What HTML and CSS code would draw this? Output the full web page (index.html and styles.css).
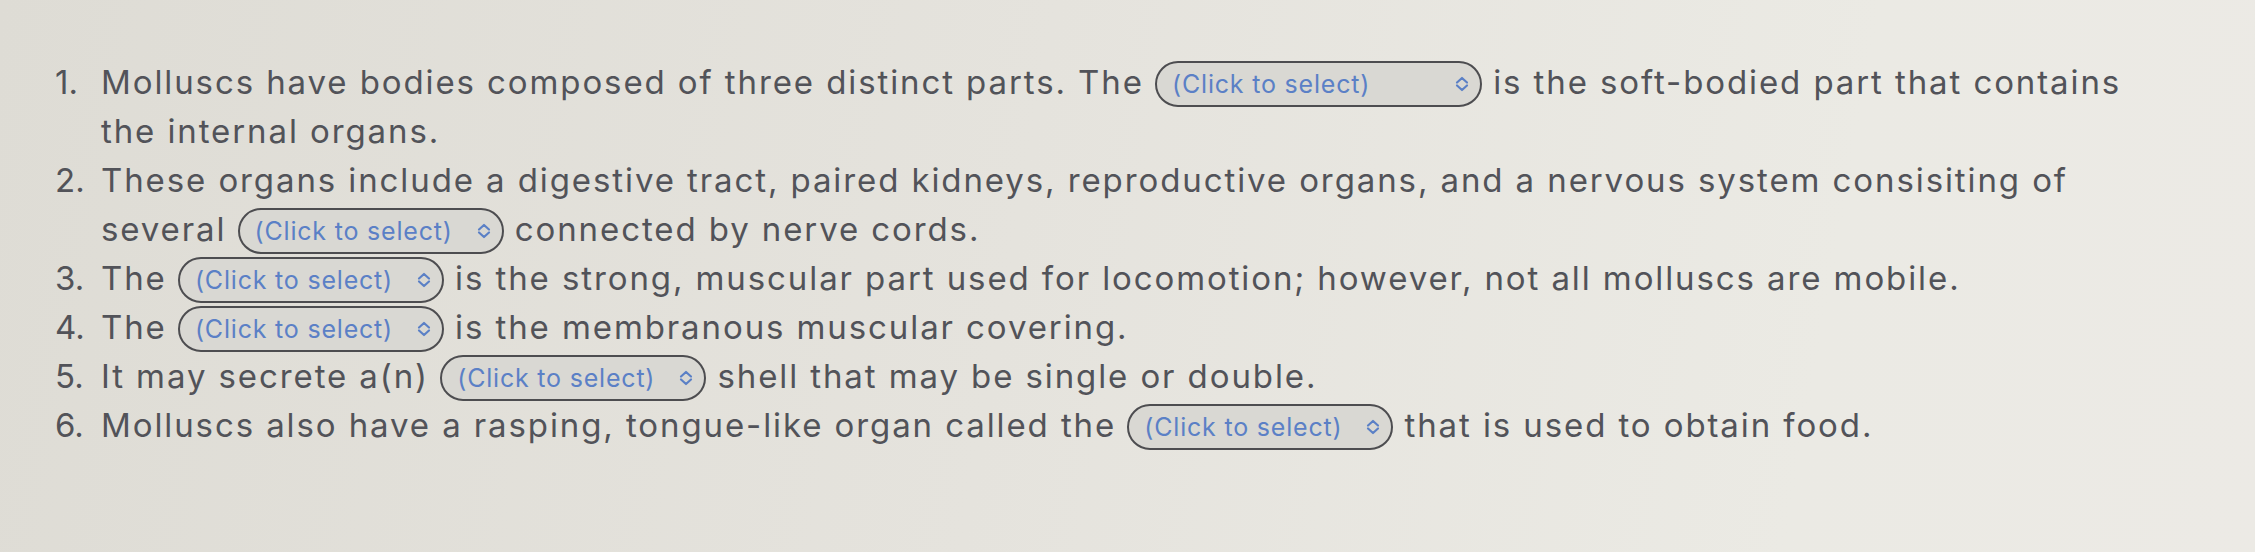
FILE: index.html
```html
<!DOCTYPE html>
<html lang="en">
<head>
<meta charset="utf-8">
<title>Molluscs</title>
<link rel="stylesheet" href="styles.css">
</head>
<body>
<main class="page">
  <ol class="items">
    <li class="item"><span class="num">1.</span><span class="text">Molluscs have bodies composed of three distinct parts. The <span class="pick wide"><span class="pick-label">(Click to select)</span><svg class="chev" viewBox="0 0 16 18" width="16" height="18"><path d="M3 7.5 L8 3 L13 7.5 M3 10.5 L8 15 L13 10.5"/></svg></span> is the soft-bodied part that contains the internal organs.</span></li>
    <li class="item"><span class="num">2.</span><span class="text">These organs include a digestive tract, paired kidneys, reproductive organs, and a nervous system consisiting of several <span class="pick"><span class="pick-label">(Click to select)</span><svg class="chev" viewBox="0 0 16 18" width="16" height="18"><path d="M3 7.5 L8 3 L13 7.5 M3 10.5 L8 15 L13 10.5"/></svg></span> connected by nerve cords.</span></li>
    <li class="item"><span class="num">3.</span><span class="text">The <span class="pick"><span class="pick-label">(Click to select)</span><svg class="chev" viewBox="0 0 16 18" width="16" height="18"><path d="M3 7.5 L8 3 L13 7.5 M3 10.5 L8 15 L13 10.5"/></svg></span> is the strong, muscular part used for locomotion; however, not all molluscs are mobile.</span></li>
    <li class="item"><span class="num">4.</span><span class="text">The <span class="pick"><span class="pick-label">(Click to select)</span><svg class="chev" viewBox="0 0 16 18" width="16" height="18"><path d="M3 7.5 L8 3 L13 7.5 M3 10.5 L8 15 L13 10.5"/></svg></span> is the membranous muscular covering.</span></li>
    <li class="item"><span class="num">5.</span><span class="text">It may secrete a(n) <span class="pick"><span class="pick-label">(Click to select)</span><svg class="chev" viewBox="0 0 16 18" width="16" height="18"><path d="M3 7.5 L8 3 L13 7.5 M3 10.5 L8 15 L13 10.5"/></svg></span> shell that may be single or double.</span></li>
    <li class="item"><span class="num">6.</span><span class="text">Molluscs also have a rasping, tongue-like organ called the <span class="pick"><span class="pick-label">(Click to select)</span><svg class="chev" viewBox="0 0 16 18" width="16" height="18"><path d="M3 7.5 L8 3 L13 7.5 M3 10.5 L8 15 L13 10.5"/></svg></span> that is used to obtain food.</span></li>
  </ol>
</main>
</body>
</html>
```
FILE: styles.css
```css
html, body {
  margin: 0;
  padding: 0;
}
body {
  width: 2255px;
  height: 552px;
  overflow: hidden;
  background: linear-gradient(100deg, #dedcd5 0%, #e5e3dd 45%, #ebeae4 80%, #eceae5 100%);
  font-family: "Inter", "Open Sans", sans-serif;
  color: #525359;
}
.page {
  padding: 58px 0 0 55px;
}
.items {
  list-style: none;
  margin: 0;
  padding: 0;
  width: 2116px;
}
.item {
  display: flex;
  font-size: 33px;
  line-height: 49px;
  letter-spacing: 1.9px;
}
.num {
  flex: 0 0 46px;
  letter-spacing: 0;
}
.text {
  flex: 1 1 auto;
}
.pick {
  display: inline-flex;
  align-items: center;
  justify-content: space-between;
  box-sizing: border-box;
  width: 266px;
  height: 46px;
  margin: -6px 0;
  padding: 0 10px 0 15px;
  border: 2px solid #4d4d50;
  border-radius: 23px;
  background: #d9d8d3;
  vertical-align: middle;
  position: relative;
  top: -1px;
  color: #5b80c6;
  font-size: 25px;
  letter-spacing: 0.8px;
  line-height: 1;
}
.pick.wide {
  width: 327px;
}
.chev {
  flex: 0 0 auto;
  fill: none;
  stroke: #5b80c6;
  stroke-width: 2.2;
  stroke-linecap: round;
  stroke-linejoin: round;
}
```
